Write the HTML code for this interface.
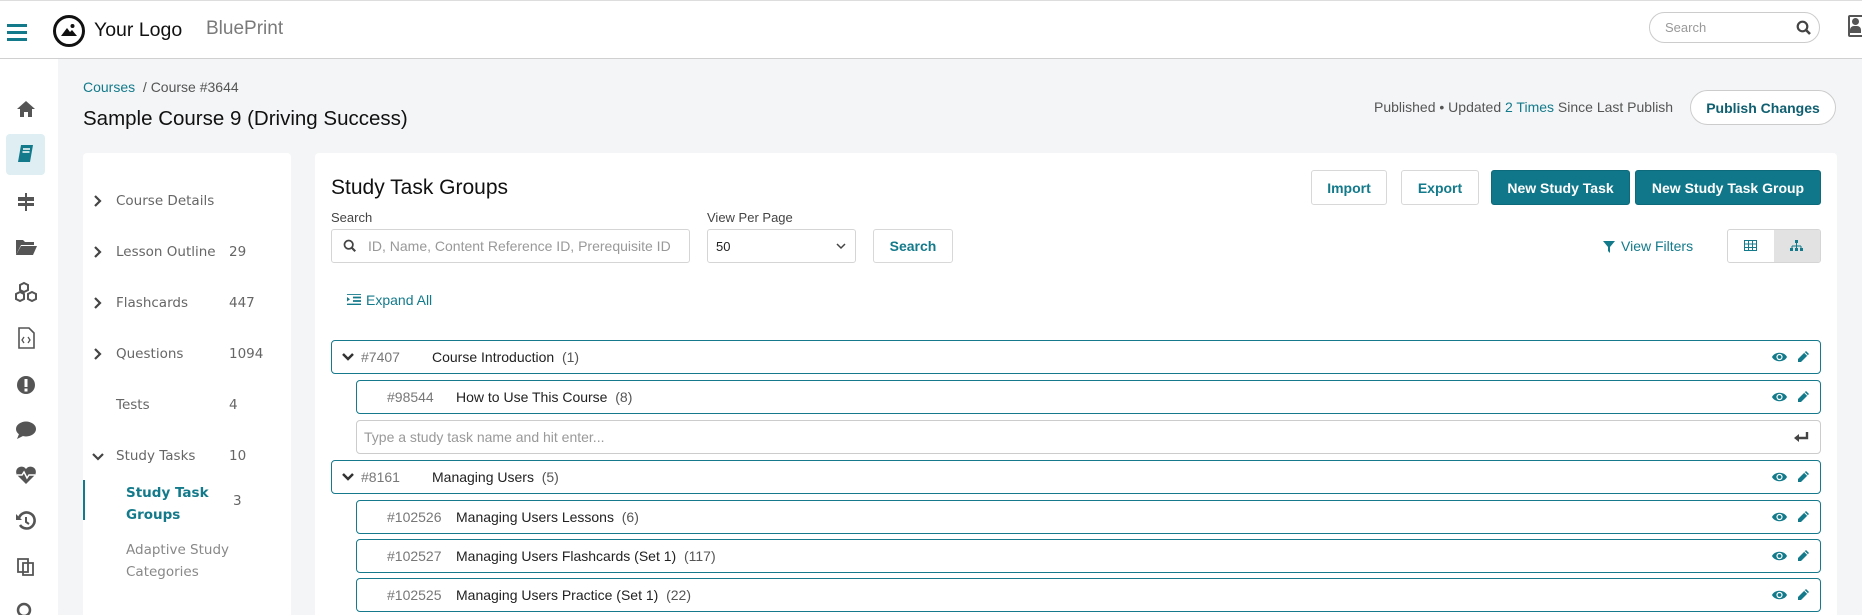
<!DOCTYPE html>
<html style="width:1862px;height:615px;overflow:hidden"><head><meta charset="utf-8"><style>
*{box-sizing:border-box;margin:0;padding:0}
body{width:1862px;height:615px;overflow:hidden;background:#f4f5f7;font-family:"Liberation Sans",sans-serif;position:relative;color:#222}
.a{position:absolute}
.hdr{left:0;top:0;width:1862px;height:59px;background:#fff;border-top:1px solid #ddd;border-bottom:1px solid #d0d0d0}
.rail{left:0;top:59px;width:58px;height:556px;background:#fff}
.ic{position:absolute;left:14px;width:24px;height:24px}
.panelL{left:83px;top:153px;width:208px;height:462px;background:#fff;border-radius:4px 4px 0 0}
.panelM{left:315px;top:153px;width:1522px;height:462px;background:#fff;border-radius:4px 4px 0 0}
.nav{position:absolute;color:#666;font-family:"DejaVu Sans","Liberation Sans",sans-serif;font-size:13.5px}
.btn{position:absolute;height:35px;border-radius:3px;font-size:14px;font-weight:bold;display:flex;align-items:center;justify-content:center}
.wb{background:#fff;border:1px solid #d8d8d8;color:#137a8b}
.tb{background:#107689;color:#fff;border:1px solid #0d6a7b}
.row{position:absolute;left:331px;width:1490px;height:34px;border:1px solid #167a8c;border-radius:4px;background:#fff;font-size:14px}
.row.c{left:356px;width:1465px}
.row span{position:absolute;top:8px}
.id{color:#777}
.eye{position:absolute;left:1440px;top:10px}
.pen{position:absolute;left:1464px;top:9px}
.c .eye{left:1415px}.c .pen{left:1439px}
</style></head><body>
<div class="a hdr">
  <div class="a" style="left:7px;top:23px;width:20px;height:3px;background:#137a8b"></div>
  <div class="a" style="left:7px;top:30px;width:20px;height:3px;background:#137a8b"></div>
  <div class="a" style="left:7px;top:37px;width:20px;height:3px;background:#137a8b"></div>
  <div class="a" style="left:53px;top:14px;width:32px;height:32px;border:3px solid #111;border-radius:50%"></div>
  <svg class="a" style="left:60px;top:22px" width="18" height="14" viewBox="0 0 18 14"><polygon points="1,13 7,5 10,9 12,7 17,13" fill="#111"/><circle cx="12.5" cy="3" r="2" fill="#111"/></svg>
  <div class="a" style="left:94px;top:18px;font-size:19.5px;color:#111">Your Logo</div>
  <div class="a" style="left:206px;top:17px;font-size:19px;color:#7a7a7a">BluePrint</div>
  <div class="a" style="left:1649px;top:11px;width:171px;height:31px;border:1px solid #ccc;border-radius:16px"></div>
  <div class="a" style="left:1665px;top:19px;font-size:13px;color:#999">Search</div>
  <svg class="a" style="left:1796px;top:19px" width="16" height="16" viewBox="0 0 16 16"><circle cx="6.5" cy="6.5" r="4.8" fill="none" stroke="#444" stroke-width="2.2"/><line x1="10" y1="10" x2="14" y2="14" stroke="#444" stroke-width="2.6"/></svg>
  <div class="a" style="left:1848px;top:14px;width:16px;height:22px;border:2px solid #555;border-radius:2px"></div>
  <div class="a" style="left:1852px;top:17px;width:7px;height:7px;border-radius:50%;background:#555"></div>
  <div class="a" style="left:1850px;top:25px;width:11px;height:7px;border-radius:4px 4px 0 0;background:#555"></div>
</div>
<div class="a rail">
  <div class="a" style="left:6px;top:75px;width:39px;height:41px;background:#dfeef2;border-radius:4px"></div>
  <svg class="ic" style="top:38px" viewBox="0 0 24 24"><path d="M3 12L12 4l9 8h-3v8h-4v-5h-4v5H6v-8z" fill="#555"/></svg>
  <svg class="ic" style="top:83px" viewBox="0 0 24 24"><path d="M7 3h12l-3 17H4z" fill="#137a8b"/><path d="M9 7h7M8.5 10h7" stroke="#fff" stroke-width="1.5"/></svg>
  <svg class="ic" style="top:131px" viewBox="0 0 24 24"><path d="M11 3h2v18h-2zM4 7h16v4H4zM4 13h16v3H4z" fill="#555"/></svg>
  <svg class="ic" style="top:176px" viewBox="0 0 24 24"><path d="M2 5h7l2 2h9v3H7l-5 10z" fill="#555"/><path d="M7 11h16l-4 9H2z" fill="#555"/></svg>
  <svg class="ic" style="top:221px" viewBox="0 0 24 24"><path d="M8 3l4 2v5l-4 2-4-2V5zM4 12l4 2v5l-4 2-4-2v-5zM16 12l4 2v5l-4 2-4-2v-5z" fill="none" stroke="#555" stroke-width="2" transform="translate(2 0)"/></svg>
  <svg class="ic" style="top:267px" viewBox="0 0 24 24"><path d="M5 2h10l5 5v15H5z" fill="none" stroke="#555" stroke-width="1.6"/><path d="M10 11l-2 3 2 3M14 11l2 3-2 3" fill="none" stroke="#555" stroke-width="1.3"/></svg>
  <svg class="ic" style="top:314px" viewBox="0 0 24 24"><circle cx="12" cy="12" r="9" fill="#555"/><rect x="10.5" y="6" width="3" height="8" fill="#fff"/><rect x="10.5" y="15.5" width="3" height="3" fill="#fff"/></svg>
  <svg class="ic" style="top:359px" viewBox="0 0 24 24"><ellipse cx="12" cy="11" rx="10" ry="7.5" fill="#555"/><path d="M5 16l-2 5 6-3z" fill="#555"/></svg>
  <svg class="ic" style="top:404px" viewBox="0 0 24 24"><path d="M12 21L3 12a5 5 0 0 1 9-6 5 5 0 0 1 9 6z" fill="#555"/><path d="M3 12h5l2-3 3 6 2-3h6" fill="none" stroke="#fff" stroke-width="1.5"/></svg>
  <svg class="ic" style="top:450px" viewBox="0 0 24 24"><path d="M5 9a8 8 0 1 1 1 7" fill="none" stroke="#555" stroke-width="2.6"/><path d="M2 5v6h6z" fill="#555"/><path d="M12 8v5l3 2" fill="none" stroke="#555" stroke-width="2"/></svg>
  <svg class="ic" style="top:495px" viewBox="0 0 24 24"><path d="M4 5h10v13H4z M9 9h10v12H9z" fill="#fff" stroke="#555" stroke-width="1.8"/></svg>
  <svg class="ic" style="top:541px" viewBox="0 0 24 24"><circle cx="10" cy="10" r="6" fill="none" stroke="#555" stroke-width="2.5"/></svg>
</div>
<div class="a" style="left:83px;top:79px;font-size:14px;color:#555"><span style="color:#137a8b">Courses</span>&nbsp; / Course #3644</div>
<div class="a" style="left:83px;top:107px;font-size:20.5px;color:#111">Sample Course 9 (Driving Success)</div>
<div class="a" style="left:1374px;top:99px;font-size:14px;color:#555">Published • Updated <span style="color:#137a8b">2 Times</span> Since Last Publish</div>
<div class="a" style="left:1690px;top:90px;width:146px;height:35px;border:1px solid #ccc;border-radius:18px;background:#fff;color:#0f5f70;font-weight:bold;font-size:14px;display:flex;align-items:center;justify-content:center">Publish Changes</div>

<div class="a panelL">
  <svg class="a" style="left:10px;top:42px" width="10" height="12" viewBox="0 0 10 12"><path d="M2 1l5 5-5 5" fill="none" stroke="#444" stroke-width="2.2"/></svg>
  <div class="nav" style="left:33px;top:40px">Course Details</div>
  <svg class="a" style="left:10px;top:93px" width="10" height="12" viewBox="0 0 10 12"><path d="M2 1l5 5-5 5" fill="none" stroke="#444" stroke-width="2.2"/></svg>
  <div class="nav" style="left:33px;top:91px">Lesson Outline</div><div class="nav" style="left:146px;top:91px">29</div>
  <svg class="a" style="left:10px;top:144px" width="10" height="12" viewBox="0 0 10 12"><path d="M2 1l5 5-5 5" fill="none" stroke="#444" stroke-width="2.2"/></svg>
  <div class="nav" style="left:33px;top:142px">Flashcards</div><div class="nav" style="left:146px;top:142px">447</div>
  <svg class="a" style="left:10px;top:195px" width="10" height="12" viewBox="0 0 10 12"><path d="M2 1l5 5-5 5" fill="none" stroke="#444" stroke-width="2.2"/></svg>
  <div class="nav" style="left:33px;top:193px">Questions</div><div class="nav" style="left:146px;top:193px">1094</div>
  <div class="nav" style="left:33px;top:244px">Tests</div><div class="nav" style="left:146px;top:244px">4</div>
  <svg class="a" style="left:9px;top:299px" width="12" height="10" viewBox="0 0 12 10"><path d="M1 2l5 5 5-5" fill="none" stroke="#444" stroke-width="2.2"/></svg>
  <div class="nav" style="left:33px;top:295px">Study Tasks</div><div class="nav" style="left:146px;top:295px">10</div>
  <div class="a" style="left:0;top:327px;width:2px;height:40px;background:#137a8b"></div>
  <div class="nav" style="left:43px;top:329px;color:#137a8b;font-weight:bold;line-height:22px">Study Task<br>Groups</div><div class="nav" style="left:150px;top:340px">3</div>
  <div class="nav" style="left:43px;top:386px;color:#888;line-height:22px">Adaptive Study<br>Categories</div>
</div>

<div class="a panelM"></div>
<div class="a" style="left:331px;top:176px;font-size:21px;color:#111">Study Task Groups</div>
<div class="btn wb" style="left:1311px;top:170px;width:76px">Import</div>
<div class="btn wb" style="left:1401px;top:170px;width:78px">Export</div>
<div class="btn tb" style="left:1491px;top:170px;width:139px">New Study Task</div>
<div class="btn tb" style="left:1635px;top:170px;width:186px">New Study Task Group</div>
<div class="a" style="left:331px;top:210px;font-size:13px;color:#444">Search</div>
<div class="a" style="left:331px;top:229px;width:359px;height:34px;border:1px solid #d5d5d5;border-radius:3px;background:#fff"></div>
<svg class="a" style="left:343px;top:239px" width="14" height="14" viewBox="0 0 16 16"><circle cx="6.5" cy="6.5" r="4.8" fill="none" stroke="#444" stroke-width="2"/><line x1="10" y1="10" x2="14" y2="14" stroke="#444" stroke-width="2.4"/></svg>
<div class="a" style="left:368px;top:238px;font-size:14px;color:#999">ID, Name, Content Reference ID, Prerequisite ID</div>
<div class="a" style="left:707px;top:210px;font-size:13px;color:#444">View Per Page</div>
<div class="a" style="left:707px;top:229px;width:149px;height:34px;border:1px solid #d5d5d5;border-radius:3px;background:#fff"></div>
<div class="a" style="left:716px;top:239px;font-size:13px;color:#222">50</div>
<svg class="a" style="left:836px;top:242px" width="10" height="8" viewBox="0 0 10 8"><path d="M1 2l4 4 4-4" fill="none" stroke="#444" stroke-width="1.5"/></svg>
<div class="btn wb" style="left:873px;top:229px;width:80px;height:34px">Search</div>
<svg class="a" style="left:1603px;top:241px" width="12" height="12" viewBox="0 0 12 12"><path d="M0 0h12L7 6v6L5 10V6z" fill="#137a8b"/></svg>
<div class="a" style="left:1621px;top:238px;font-size:14px;color:#137a8b">View Filters</div>
<div class="a" style="left:1727px;top:229px;width:94px;height:34px;border:1px solid #d5d5d5;border-radius:3px;background:#fff;overflow:hidden"><div class="a" style="left:46px;top:0;width:48px;height:34px;background:#e2e2e2"></div></div>
<svg class="a" style="left:1744px;top:240px" width="13" height="11" viewBox="0 0 13 11"><rect x="0.5" y="0.5" width="12" height="10" fill="none" stroke="#137a8b"/><path d="M0 4h13M0 7.5h13M4.5 0v11M8.5 0v11" stroke="#137a8b"/></svg>
<svg class="a" style="left:1790px;top:240px" width="13" height="11" viewBox="0 0 13 11"><rect x="5" y="0" width="3" height="3" fill="#137a8b"/><path d="M6.5 3v3M2 6h9M2 6v2M11 6v2M6.5 6v2" stroke="#137a8b"/><rect x="0" y="8" width="3" height="3" fill="#137a8b"/><rect x="5" y="8" width="3" height="3" fill="#137a8b"/><rect x="10" y="8" width="3" height="3" fill="#137a8b"/></svg>
<svg class="a" style="left:347px;top:294px" width="14" height="11" viewBox="0 0 14 11"><path d="M0 0h14M6 3.5h8M6 7h8M0 10.5h14" stroke="#137a8b" stroke-width="1.8"/><path d="M0 3l3 2.2L0 7.5z" fill="#137a8b"/></svg>
<div class="a" style="left:366px;top:292px;font-size:14px;color:#137a8b">Expand All</div>

<svg width="0" height="0" style="position:absolute"><defs>
<symbol id="eye" viewBox="0 0 16 12"><path d="M0 6C3 0 13 0 16 6 13 12 3 12 0 6z" fill="#137a8b"/><circle cx="8" cy="6" r="3.3" fill="#fff"/><circle cx="8" cy="6" r="2" fill="#137a8b"/></symbol>
<symbol id="pen" viewBox="0 0 14 14"><path d="M10 1l3 3-8 8H2V9z" fill="#137a8b"/><path d="M8.5 2.5l3 3" stroke="#fff" stroke-width="1"/></symbol>
</defs></svg>

<div class="row" style="top:340px"><svg class="a" style="left:10px;top:12px" width="12" height="9" viewBox="0 0 12 9"><path d="M1 1l5 5 5-5" fill="none" stroke="#333" stroke-width="2.5"/></svg><span class="id" style="left:29px">#7407</span><span style="left:100px">Course Introduction&nbsp; <span style="position:static;color:#555">(1)</span></span><svg class="eye" width="15" height="12"><use href="#eye"/></svg><svg class="pen" width="14" height="14"><use href="#pen"/></svg></div>
<div class="row c" style="top:380px"><span class="id" style="left:30px">#98544</span><span style="left:99px">How to Use This Course&nbsp; <span style="position:static;color:#555">(8)</span></span><svg class="eye" width="15" height="12"><use href="#eye"/></svg><svg class="pen" width="14" height="14"><use href="#pen"/></svg></div>
<div class="row c" style="top:420px;border-color:#ccc"><span style="left:7px;color:#999">Type a study task name and hit enter...</span><svg class="a" style="left:1437px;top:11px" width="15" height="11" viewBox="0 0 15 11"><path d="M13 0v6H4" fill="none" stroke="#444" stroke-width="2.4"/><path d="M0 6l5-4v8z" fill="#444"/></svg></div>
<div class="row" style="top:460px"><svg class="a" style="left:10px;top:12px" width="12" height="9" viewBox="0 0 12 9"><path d="M1 1l5 5 5-5" fill="none" stroke="#333" stroke-width="2.5"/></svg><span class="id" style="left:29px">#8161</span><span style="left:100px">Managing Users&nbsp; <span style="position:static;color:#555">(5)</span></span><svg class="eye" width="15" height="12"><use href="#eye"/></svg><svg class="pen" width="14" height="14"><use href="#pen"/></svg></div>
<div class="row c" style="top:500px"><span class="id" style="left:30px">#102526</span><span style="left:99px">Managing Users Lessons&nbsp; <span style="position:static;color:#555">(6)</span></span><svg class="eye" width="15" height="12"><use href="#eye"/></svg><svg class="pen" width="14" height="14"><use href="#pen"/></svg></div>
<div class="row c" style="top:539px"><span class="id" style="left:30px">#102527</span><span style="left:99px">Managing Users Flashcards (Set 1)&nbsp; <span style="position:static;color:#555">(117)</span></span><svg class="eye" width="15" height="12"><use href="#eye"/></svg><svg class="pen" width="14" height="14"><use href="#pen"/></svg></div>
<div class="row c" style="top:578px"><span class="id" style="left:30px">#102525</span><span style="left:99px">Managing Users Practice (Set 1)&nbsp; <span style="position:static;color:#555">(22)</span></span><svg class="eye" width="15" height="12"><use href="#eye"/></svg><svg class="pen" width="14" height="14"><use href="#pen"/></svg></div>
</body></html>
